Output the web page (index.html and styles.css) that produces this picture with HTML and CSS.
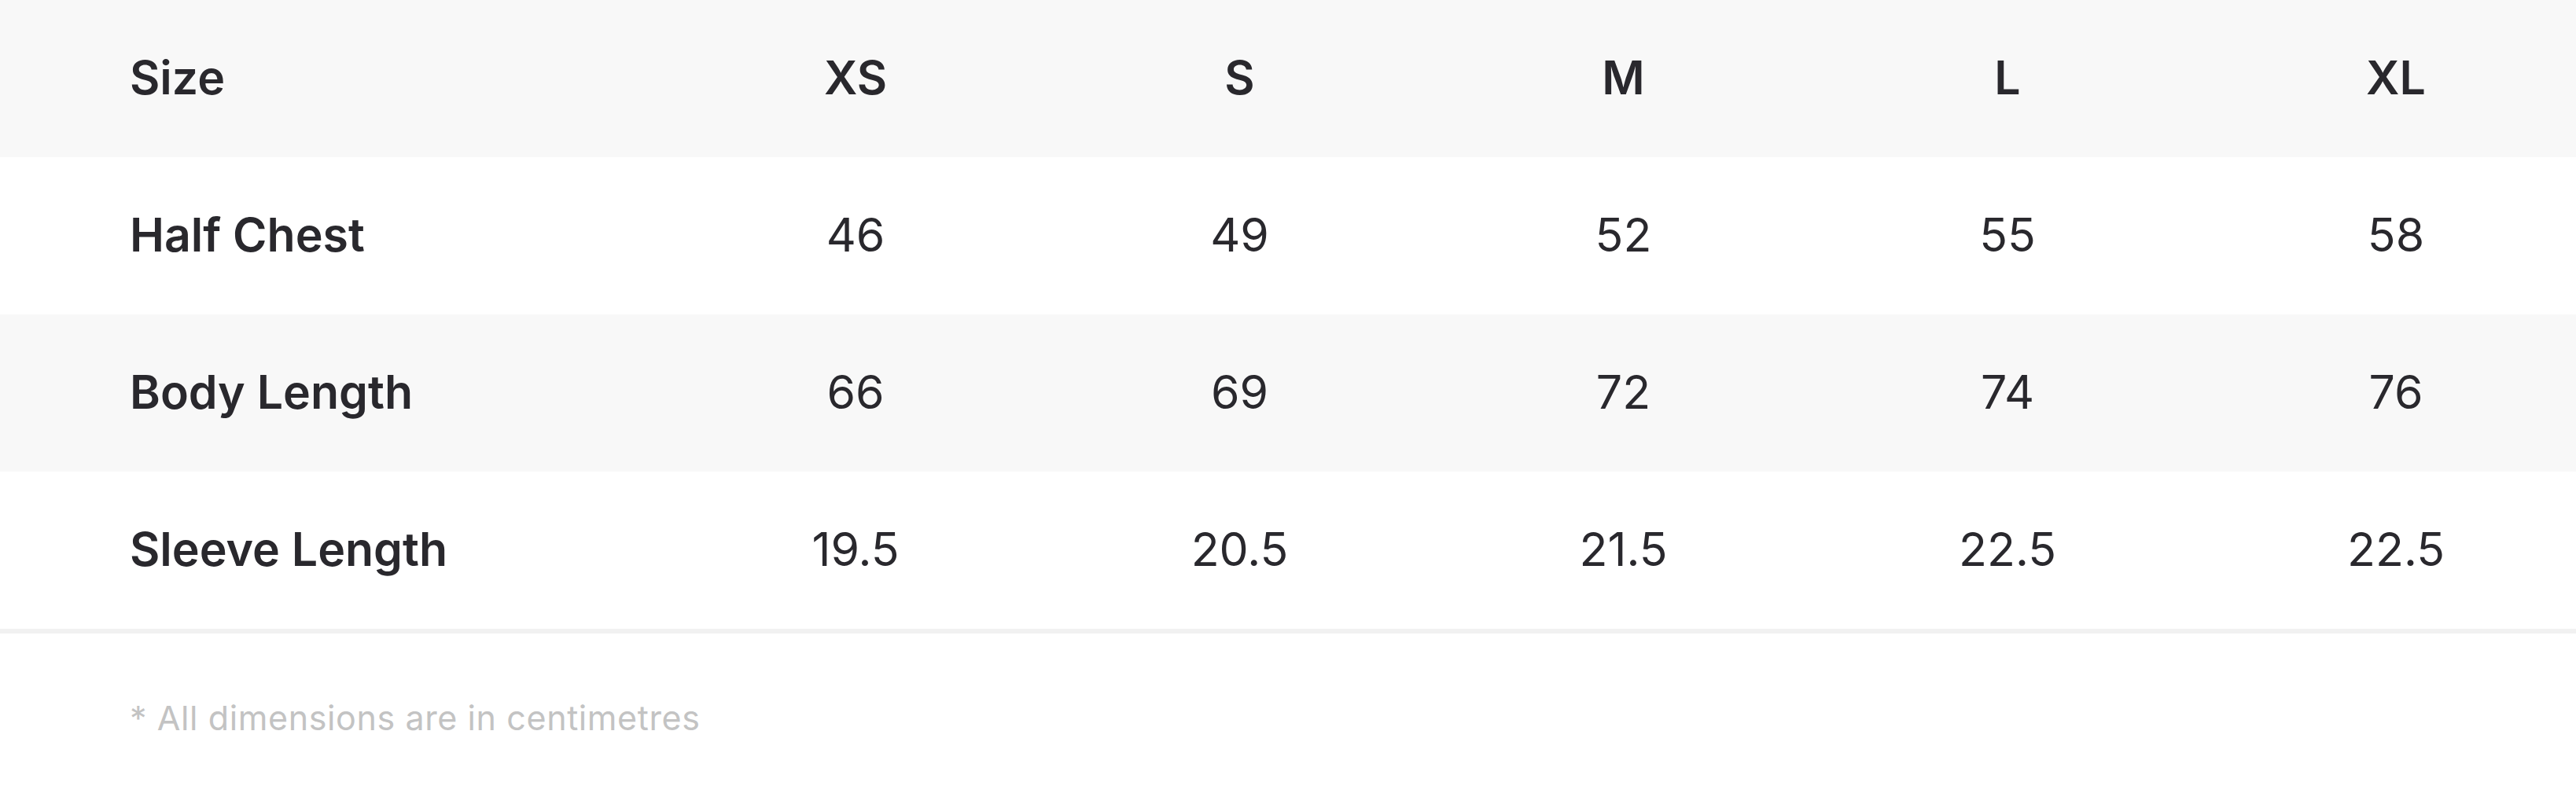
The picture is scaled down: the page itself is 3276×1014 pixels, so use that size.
FILE: index.html
```html
<!DOCTYPE html>
<html lang="en">
<head>
<meta charset="utf-8">
<title>Size Guide</title>
<link rel="stylesheet" href="styles.css">
</head>
<body>
<div class="size-chart">
  <div class="row row-shaded row-head">
    <div class="cell label">Size</div>
    <div class="cell">XS</div>
    <div class="cell">S</div>
    <div class="cell">M</div>
    <div class="cell">L</div>
    <div class="cell last">XL</div>
  </div>
  <div class="row">
    <div class="cell label">Half Chest</div>
    <div class="cell">46</div>
    <div class="cell">49</div>
    <div class="cell">52</div>
    <div class="cell">55</div>
    <div class="cell last">58</div>
  </div>
  <div class="row row-shaded">
    <div class="cell label">Body Length</div>
    <div class="cell">66</div>
    <div class="cell">69</div>
    <div class="cell">72</div>
    <div class="cell">74</div>
    <div class="cell last">76</div>
  </div>
  <div class="row row-last">
    <div class="cell label">Sleeve Length</div>
    <div class="cell">19.5</div>
    <div class="cell">20.5</div>
    <div class="cell">21.5</div>
    <div class="cell">22.5</div>
    <div class="cell last">22.5</div>
  </div>
</div>
<p class="note">* All dimensions are in centimetres</p>
</body>
</html>
```

FILE: styles.css
```css
html, body {
  margin: 0;
  padding: 0;
  background: #ffffff;
}

body {
  font-family: Inter, Lato, "Noto Sans", sans-serif;
  color: #29282d;
}

.size-chart {
  display: flex;
  flex-direction: column;
}

.row {
  display: grid;
  grid-template-columns: 844px 488px 489px 487px 490px 1fr;
  align-items: center;
  height: 200px;
  font-size: 59px;
  font-weight: 400;
}

.row-shaded {
  background: #f8f8f8;
}

.row-head .cell {
  font-weight: 600;
}

.row-last {
  border-bottom: 6px solid #f1f1f1;
}

.cell {
  text-align: center;
  line-height: 1;
  padding-bottom: 3px;
}

.cell.last {
  padding-left: 20px;
}

.cell.label {
  text-align: left;
  padding-left: 165px;
  font-weight: 600;
}

.note {
  margin: 0;
  padding: 86px 0 0 165px;
  font-size: 43px;
  letter-spacing: 0.6px;
  line-height: 1;
  color: #c3c3c3;
}
```
